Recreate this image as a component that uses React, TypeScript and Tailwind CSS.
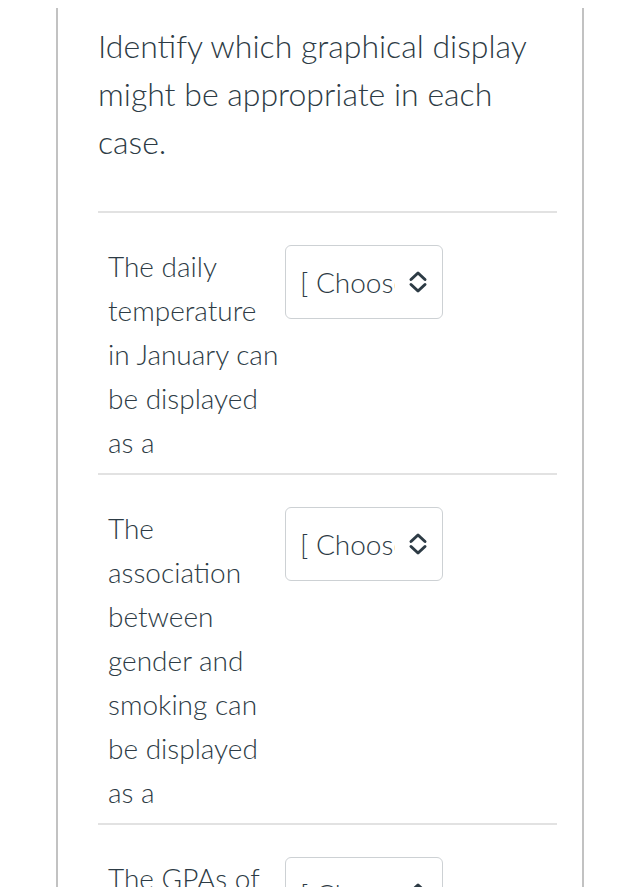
import React from 'react'

// explicit line breaks so the narrow column wraps like the reference
const ROWS: string[][] = [
  ['The daily', 'temperature', 'in January can', 'be displayed', 'as a'],
  ['The', 'association', 'between', 'gender and', 'smoking can', 'be displayed', 'as a'],
  ['The GPAs of', 'students in a', 'class can be', 'displayed as a'],
]

function ChooseSelect() {
  return (
    <div className="w-[158px] h-[74px] shrink-0 flex items-center rounded-[6px] border-[1.5px] border-[#cdd1d4] bg-white pl-[14px] pr-[14px]">
      <div className="w-[95px] overflow-hidden whitespace-nowrap text-[28px] font-light text-[#2d3b45]">[ Choose ]</div>
      <svg width="20" height="24" viewBox="0 0 20 24" className="shrink-0 ml-[13px]">
        <path d="M3 9.5 L10 3 L17 9.5" fill="none" stroke="#2d3b45" strokeWidth="3" strokeLinecap="round" strokeLinejoin="round" />
        <path d="M3 14.5 L10 21 L17 14.5" fill="none" stroke="#2d3b45" strokeWidth="3" strokeLinecap="round" strokeLinejoin="round" />
      </svg>
    </div>
  )
}

export default function App() {
  return (
    <div className="bg-white h-[887px] overflow-hidden px-[56px] pt-[8px] font-['Lato',sans-serif] text-[#2d3b45]">
      <div className="border-x-2 border-[#c2c2c2] min-h-[900px] pl-[40px] pr-[25px]">
        <p className="text-[32px] leading-[48px] pt-[14px] font-light">
          Identify which graphical display might be appropriate in each case.
        </p>
        <div className="mt-[45px]">
          {ROWS.map((lines, i) => (
            <div key={i} className="border-t-2 border-[#e2e2e2] pl-[10px] pt-[31px] pb-[9px] flex gap-[5px]">
              <div className="w-[172px] text-[28px] leading-[44px] font-light">
                {lines.map((line, j) => (
                  <div key={j} className="whitespace-nowrap">{line}</div>
                ))}
              </div>
              <div className="pt-[1px]">
                <ChooseSelect />
              </div>
            </div>
          ))}
        </div>
      </div>
    </div>
  )
}
